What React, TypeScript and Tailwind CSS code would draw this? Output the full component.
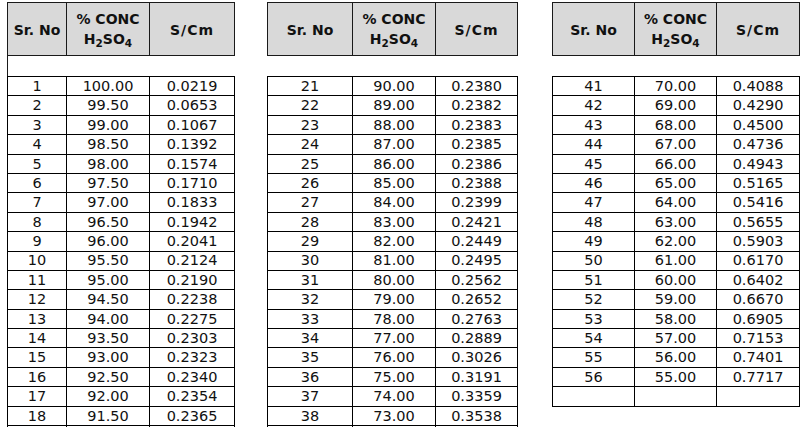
type Row = [string, string, string];

const left: Row[] = [
  ['1', '100.00', '0.0219'],
  ['2', '99.50', '0.0653'],
  ['3', '99.00', '0.1067'],
  ['4', '98.50', '0.1392'],
  ['5', '98.00', '0.1574'],
  ['6', '97.50', '0.1710'],
  ['7', '97.00', '0.1833'],
  ['8', '96.50', '0.1942'],
  ['9', '96.00', '0.2041'],
  ['10', '95.50', '0.2124'],
  ['11', '95.00', '0.2190'],
  ['12', '94.50', '0.2238'],
  ['13', '94.00', '0.2275'],
  ['14', '93.50', '0.2303'],
  ['15', '93.00', '0.2323'],
  ['16', '92.50', '0.2340'],
  ['17', '92.00', '0.2354'],
  ['18', '91.50', '0.2365'],
  // next row is below the fold, only its borders peek in
  ['', '', ''],
];

const middle: Row[] = [
  ['21', '90.00', '0.2380'],
  ['22', '89.00', '0.2382'],
  ['23', '88.00', '0.2383'],
  ['24', '87.00', '0.2385'],
  ['25', '86.00', '0.2386'],
  ['26', '85.00', '0.2388'],
  ['27', '84.00', '0.2399'],
  ['28', '83.00', '0.2421'],
  ['29', '82.00', '0.2449'],
  ['30', '81.00', '0.2495'],
  ['31', '80.00', '0.2562'],
  ['32', '79.00', '0.2652'],
  ['33', '78.00', '0.2763'],
  ['34', '77.00', '0.2889'],
  ['35', '76.00', '0.3026'],
  ['36', '75.00', '0.3191'],
  ['37', '74.00', '0.3359'],
  ['38', '73.00', '0.3538'],
  ['', '', ''],
];

const right: Row[] = [
  ['41', '70.00', '0.4088'],
  ['42', '69.00', '0.4290'],
  ['43', '68.00', '0.4500'],
  ['44', '67.00', '0.4736'],
  ['45', '66.00', '0.4943'],
  ['46', '65.00', '0.5165'],
  ['47', '64.00', '0.5416'],
  ['48', '63.00', '0.5655'],
  ['49', '62.00', '0.5903'],
  ['50', '61.00', '0.6170'],
  ['51', '60.00', '0.6402'],
  ['52', '59.00', '0.6670'],
  ['53', '58.00', '0.6905'],
  ['54', '57.00', '0.7153'],
  ['55', '56.00', '0.7401'],
  ['56', '55.00', '0.7717'],
  ['', '', ''],
];

function DataTable({ rows, cols, spacerBorder }: { rows: Row[]; cols: string; spacerBorder?: boolean }) {
  return (
    <div className="flex flex-col">
      {/* header */}
      <div className={`grid ${cols} border-t border-l border-[#1a1a1a] bg-[#d9d9d9] font-bold text-[14px] text-[#111]`}>
        <div className="h-[53px] border-r border-b border-[#1a1a1a] flex items-center justify-center pt-[3px]">Sr. No</div>
        <div className="h-[53px] border-r border-b border-[#1a1a1a] flex flex-col items-center justify-center leading-[20px]">
          <span>% CONC</span>
          <span>
            H<sub>2</sub>SO<sub>4</sub>
          </span>
        </div>
        <div className="h-[53px] border-r border-b border-[#1a1a1a] flex items-center justify-center pt-[3px] tracking-[1px]">S/Cm</div>
      </div>

      {/* blank spacer row */}
      <div className={spacerBorder ? 'h-[20px] border-l border-[#1a1a1a]' : 'h-[20px]'} />

      {/* body */}
      <div className={`grid ${cols} border-t border-l border-black text-[14.5px] text-[#111]`}>
        {rows.map((r, i) =>
          r.map((cell, j) => (
            <div
              key={`${i}-${j}`}
              className="h-[19.4px] border-r border-b border-black flex items-center justify-center leading-none"
            >
              {cell}
            </div>
          ))
        )}
      </div>
    </div>
  );
}

export default function App() {
  return (
    <div
      className="w-[812px] h-[427px] overflow-hidden bg-white pt-[2px] pl-[7px] flex items-start"
      style={{ fontFamily: '"DejaVu Sans", Verdana, sans-serif' }}
    >
      <DataTable rows={left} cols="grid-cols-[59px_83px_85px]" spacerBorder />
      <div className="ml-[32px]">
        <DataTable rows={middle} cols="grid-cols-[85px_83px_82px]" />
      </div>
      <div className="ml-[34px]">
        <DataTable rows={right} cols="grid-cols-[82px_82px_83px]" />
      </div>
    </div>
  );
}
